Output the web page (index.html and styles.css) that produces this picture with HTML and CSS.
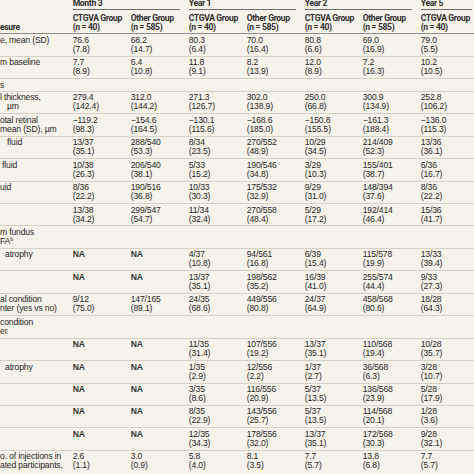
FILE: index.html
```html
<!DOCTYPE html>
<html>
<head>
<meta charset="utf-8">
<link rel="stylesheet" href="styles.css">
</head>
<body>
<table class="tbl">
<colgroup>
<col class="c-label"><col class="c-data"><col class="c-data"><col class="c-data"><col class="c-data"><col class="c-data"><col class="c-data"><col class="c-last">
</colgroup>
<thead>
<tr class="grp">
<th></th>
<th colspan="2"><div class="grp-in">Month 3</div></th>
<th colspan="2"><div class="grp-in">Year 1</div></th>
<th colspan="2"><div class="grp-in">Year 2</div></th>
<th><div class="grp-in">Year 5</div></th>
</tr>
<tr class="cols">
<th class="lbl"><br>esure</th>
<th>CTGVA Group<br>(n = 40)</th>
<th>Other Group<br>(n = 585)</th>
<th>CTGVA Group<br>(n = 40)</th>
<th>Other Group<br>(n = 585)</th>
<th>CTGVA Group<br>(n = 40)</th>
<th>Other Group<br>(n = 585)</th>
<th>CTGVA Group<br>(n = 40)</th>
</tr>
</thead>
<tbody>
<tr><td>e, mean (SD)</td><td>76.6<br>(7.8)</td><td>68.2<br>(14.7)</td><td>80.3<br>(6.4)</td><td>70.0<br>(16.4)</td><td>80.8<br>(6.6)</td><td>69.0<br>(16.9)</td><td>79.0<br>(5.5)</td></tr>
<tr><td>m baseline</td><td>7.7<br>(8.9)</td><td>6.4<br>(10.8)</td><td>11.8<br>(9.1)</td><td>8.2<br>(13.9)</td><td>12.0<br>(8.9)</td><td>7.2<br>(16.3)</td><td>10.2<br>(10.5)</td></tr>
<tr class="single"><td>s</td><td></td><td></td><td></td><td></td><td></td><td></td><td></td></tr>
<tr><td>l thickness,<br><span class="ind7">µm</span></td><td>279.4<br>(142.4)</td><td>312.0<br>(144.2)</td><td>271.3<br>(126.7)</td><td>302.0<br>(138.9)</td><td>250.0<br>(66.8)</td><td>300.9<br>(134.9)</td><td>252.8<br>(106.2)</td></tr>
<tr><td>otal retinal<br>mean (SD), µm</td><td>−119.2<br>(98.3)</td><td>−154.6<br>(164.5)</td><td>−130.1<br>(115.6)</td><td>−168.6<br>(185.0)</td><td>−150.8<br>(155.5)</td><td>−161.3<br>(188.4)</td><td>−136.0<br>(115.3)</td></tr>
<tr><td><span class="ind7">fluid</span></td><td>13/37<br>(35.1)</td><td>288/540<br>(53.3)</td><td>8/34<br>(23.5)</td><td>270/552<br>(48.9)</td><td>10/29<br>(34.5)</td><td>214/409<br>(52.3)</td><td>13/36<br>(36.1)</td></tr>
<tr><td><span class="ind2">fluid</span></td><td>10/38<br>(26.3)</td><td>206/540<br>(38.1)</td><td>5/33<br>(15.2)</td><td>190/546<br>(34.8)</td><td>3/29<br>(10.3)</td><td>155/401<br>(38.7)</td><td>6/36<br>(16.7)</td></tr>
<tr><td>uid</td><td>8/36<br>(22.2)</td><td>190/516<br>(36.8)</td><td>10/33<br>(30.3)</td><td>175/532<br>(32.9)</td><td>9/29<br>(31.0)</td><td>148/394<br>(37.6)</td><td>8/36<br>(22.2)</td></tr>
<tr><td></td><td>13/38<br>(34.2)</td><td>299/547<br>(54.7)</td><td>11/34<br>(32.4)</td><td>270/558<br>(48.4)</td><td>5/29<br>(17.2)</td><td>192/414<br>(46.4)</td><td>15/36<br>(41.7)</td></tr>
<tr><td>m fundus<br>FA<sup>b</sup></td><td></td><td></td><td></td><td></td><td></td><td></td><td></td></tr>
<tr><td><span class="ind5">atrophy</span></td><td class="na">NA</td><td class="na">NA</td><td>4/37<br>(10.8)</td><td>94/561<br>(16.8)</td><td>6/39<br>(15.4)</td><td>115/578<br>(19.9)</td><td>13/33<br>(39.4)</td></tr>
<tr><td></td><td class="na">NA</td><td class="na">NA</td><td>13/37<br>(35.1)</td><td>198/562<br>(35.2)</td><td>16/39<br>(41.0)</td><td>255/574<br>(44.4)</td><td>9/33<br>(27.3)</td></tr>
<tr><td>al condition<br>nter (yes vs no)</td><td>9/12<br>(75.0)</td><td>147/165<br>(89.1)</td><td>24/35<br>(68.6)</td><td>449/556<br>(80.8)</td><td>24/37<br>(64.9)</td><td>458/568<br>(80.6)</td><td>18/28<br>(64.3)</td></tr>
<tr><td>condition<br>er</td><td></td><td></td><td></td><td></td><td></td><td></td><td></td></tr>
<tr><td></td><td class="na">NA</td><td class="na">NA</td><td>11/35<br>(31.4)</td><td>107/556<br>(19.2)</td><td>13/37<br>(35.1)</td><td>110/568<br>(19.4)</td><td>10/28<br>(35.7)</td></tr>
<tr><td><span class="ind5">atrophy</span></td><td class="na">NA</td><td class="na">NA</td><td>1/35<br>(2.9)</td><td>12/556<br>(2.2)</td><td>1/37<br>(2.7)</td><td>36/568<br>(6.3)</td><td>3/28<br>(10.7)</td></tr>
<tr><td></td><td class="na">NA</td><td class="na">NA</td><td>3/35<br>(8.6)</td><td>116/556<br>(20.9)</td><td>5/37<br>(13.5)</td><td>136/568<br>(23.9)</td><td>5/28<br>(17.9)</td></tr>
<tr><td></td><td class="na">NA</td><td class="na">NA</td><td>8/35<br>(22.9)</td><td>143/556<br>(25.7)</td><td>5/37<br>(13.5)</td><td>114/568<br>(20.1)</td><td>1/28<br>(3.6)</td></tr>
<tr><td></td><td class="na">NA</td><td class="na">NA</td><td>12/35<br>(34.3)</td><td>178/556<br>(32.0)</td><td>13/37<br>(35.1)</td><td>172/568<br>(30.3)</td><td>9/28<br>(32.1)</td></tr>
<tr class="last"><td>o. of injections in<br>ated participants,</td><td>2.6<br>(1.1)</td><td>3.0<br>(0.9)</td><td>5.8<br>(4.0)</td><td>8.1<br>(3.5)</td><td>7.7<br>(5.7)</td><td>13.8<br>(6.8)</td><td>7.7<br>(5.7)</td></tr>
</tbody>
</table>
</body>
</html>
```
FILE: styles.css
```css
html, body {
  margin: 0;
  padding: 0;
  overflow: hidden;
  background: #f6f3eb;
}

.tbl {
  border-collapse: collapse;
  table-layout: fixed;
  width: 481px;
  margin-top: -1px;
  font-family: "Liberation Sans", Arial, sans-serif;
  font-size: 8.6px;
  letter-spacing: -0.15px;
  line-height: 9px;
  color: #262626;
}

.c-label { width: 72.7px; }
.c-data { width: 58px; }
.c-last { width: 60.3px; }

.tbl th,
.tbl td {
  padding: 1.5px 0 1.95px 0;
  text-align: left;
  vertical-align: top;
  white-space: nowrap;
  overflow: hidden;
}

.tbl th {
  font-family: Roboto, "Liberation Sans", sans-serif;
  font-weight: 700;
  font-size: 8.6px;
  letter-spacing: -0.35px;
  color: #2e2e2e;
}

.grp th {
  padding: 0 9px 1px 0;
}

.grp-in {
  border-bottom: 1px solid #6f6f6f;
  padding-bottom: 1px;
}

.cols th {
  padding: 2.5px 0 1.7px 0;
  border-bottom: 1px solid #8c8c8c;
}

tbody td {
  border-bottom: 1px solid #d6d1c6;
}

tbody tr.single td {
  padding-bottom: 1.25px;
}

tbody tr.last td {
  padding-bottom: 12px;
}

.na {
  font-weight: bold;
  letter-spacing: -0.2px;
  color: #333;
}

.ind7 { padding-left: 7px; }
.ind5 { padding-left: 5px; }
.ind2 { padding-left: 2px; }

sup {
  font-size: 5.5px;
  line-height: 0;
  vertical-align: 3px;
}
```
